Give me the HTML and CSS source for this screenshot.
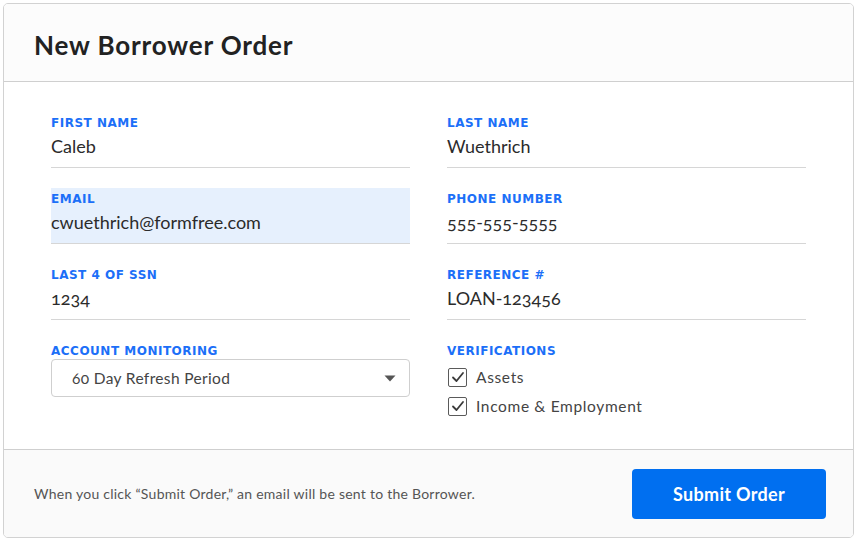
FILE: index.html
```html
<!DOCTYPE html>
<html lang="en">
<head>
<meta charset="utf-8">
<title>New Borrower Order</title>
<link rel="stylesheet" href="styles.css">
</head>
<body>
<div class="card">
  <header class="card-header">
    <h1 class="title">New Borrower Order</h1>
  </header>
  <section class="card-body">
    <div class="field">
      <div class="label">First Name</div>
      <div class="value">Caleb</div>
    </div>
    <div class="field">
      <div class="label">Last Name</div>
      <div class="value">Wuethrich</div>
    </div>
    <div class="field field-active">
      <div class="label">Email</div>
      <div class="value">cwuethrich@formfree.com</div>
    </div>
    <div class="field">
      <div class="label">Phone Number</div>
      <div class="value">555-555-5555</div>
    </div>
    <div class="field">
      <div class="label">Last 4 of SSN</div>
      <div class="value">1234</div>
    </div>
    <div class="field">
      <div class="label">Reference #</div>
      <div class="value">LOAN-123456</div>
    </div>
    <div class="group">
      <div class="label">Account Monitoring</div>
      <div class="select">
        <span class="select-text">60 Day Refresh Period</span>
        <svg class="select-arrow" width="12" height="7" viewBox="0 0 12 7"><path d="M0.5 0.5 L11.5 0.5 L6 6.5 Z" fill="#555"/></svg>
      </div>
    </div>
    <div class="group">
      <div class="label">Verifications</div>
      <div class="checks">
        <div class="check-row">
          <span class="checkbox"><svg width="14" height="12" viewBox="0 0 14 12"><path d="M2 6.5 L5.5 10 L12 2" fill="none" stroke="#3a3a3a" stroke-width="1.8" stroke-linecap="round" stroke-linejoin="round"/></svg></span>
          <span class="check-label">Assets</span>
        </div>
        <div class="check-row">
          <span class="checkbox"><svg width="14" height="12" viewBox="0 0 14 12"><path d="M2 6.5 L5.5 10 L12 2" fill="none" stroke="#3a3a3a" stroke-width="1.8" stroke-linecap="round" stroke-linejoin="round"/></svg></span>
          <span class="check-label">Income &amp; Employment</span>
        </div>
      </div>
    </div>
  </section>
  <footer class="card-footer">
    <p class="note">When you click “Submit Order,” an email will be sent to the Borrower.</p>
    <button class="submit" type="button">Submit Order</button>
  </footer>
</div>
</body>
</html>
```

FILE: styles.css
```css
* { box-sizing: border-box; }
html, body { margin: 0; }
body {
  padding: 3px;
  background: #ffffff;
  font-family: Lato, "Open Sans", sans-serif;
  color: #333;
}
.card {
  width: 851px;
  height: 535px;
  border: 1px solid #d2d2d2;
  border-radius: 5px;
  background: #fff;
  display: flex;
  flex-direction: column;
  overflow: hidden;
}
.card-header {
  height: 78px;
  padding: 25px 0 0 30px;
  background: #fcfcfc;
  border-bottom: 1px solid #cfcfcf;
}
.title {
  margin: 0;
  font-size: 26px;
  line-height: 32px;
  font-weight: 700;
  color: #222;
  letter-spacing: 0.85px;
}
.card-body {
  flex: 1;
  padding: 30px 46px 0 47px;
  display: grid;
  grid-template-columns: 359px 359px;
  column-gap: 37px;
  row-gap: 20px;
  align-content: start;
}
.field {
  height: 56px;
  padding-top: 4px;
  border-bottom: 1px solid #d6d6d6;
}
.field-active {
  background: #e6f0fd;
}
.label {
  font-family: "DejaVu Sans", sans-serif;
  font-weight: 700;
  font-size: 12px;
  line-height: 14px;
  letter-spacing: 0.5px;
  text-transform: uppercase;
  color: #1c6ff8;
}
.value {
  margin-top: 4px;
  font-size: 18px;
  line-height: 24px;
  color: #2b2b2b;
  font-variant-numeric: oldstyle-nums;
}
.group {
  padding-top: 4px;
}
.select {
  margin-top: 1px;
  height: 38px;
  border: 1px solid #cfcfcf;
  border-radius: 4px;
  display: flex;
  align-items: center;
  justify-content: space-between;
  padding: 0 13px 0 20px;
}
.select-text {
  font-size: 15.5px;
  letter-spacing: 0.35px;
  color: #444;
  font-variant-numeric: oldstyle-nums;
}
.select-arrow { display: block; }
.checks {
  margin-top: 9px;
  display: flex;
  flex-direction: column;
  gap: 9px;
}
.check-row {
  height: 20px;
  display: flex;
  align-items: center;
  gap: 9px;
}
.checkbox {
  width: 19px;
  height: 19px;
  border: 1.5px solid #5a5a5a;
  border-radius: 2px;
  display: flex;
  align-items: center;
  justify-content: center;
  margin-left: 1px;
}
.checkbox svg { display: block; }
.check-label {
  font-size: 15.5px;
  letter-spacing: 0.65px;
  color: #444;
}
.card-footer {
  height: 88px;
  border-top: 1px solid #cfcfcf;
  background: #fafafa;
  display: flex;
  align-items: center;
  justify-content: space-between;
  padding: 0 27px 0 30px;
}
.note {
  margin: 0;
  font-size: 14px;
  letter-spacing: 0.25px;
  color: #555;
}
.submit {
  width: 194px;
  height: 50px;
  border: none;
  border-radius: 4px;
  background: #006ff0;
  color: #fff;
  font-family: Lato, sans-serif;
  font-weight: 700;
  font-size: 18px;
  letter-spacing: 0.3px;
}
```
